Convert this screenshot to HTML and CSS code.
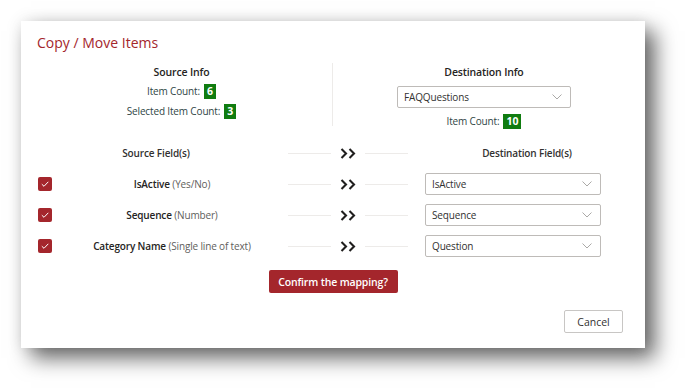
FILE: index.html
```html
<!DOCTYPE html>
<html lang="en">
<head>
<meta charset="utf-8">
<title>Copy / Move Items</title>
<link rel="stylesheet" href="styles.css">
</head>
<body>
<div class="dialog">
  <h1 class="title">Copy / Move Items</h1>

  <div class="info">
    <div class="info-col info-source">
      <div class="info-head">Source Info</div>
      <div class="info-line">Item Count: <span class="badge">6</span></div>
      <div class="info-line">Selected Item Count: <span class="badge">3</span></div>
    </div>
    <div class="info-col">
      <div class="info-head">Destination Info</div>
      <div class="select select-list">
        <span>FAQQuestions</span>
        <svg class="chev" width="10" height="6" viewBox="0 0 10 6"><path d="M0.5 0.5 L5 5 L9.5 0.5" fill="none" stroke="#a19f9d" stroke-width="0.9"/></svg>
      </div>
      <div class="info-line info-dest">Item Count: <span class="badge">10</span></div>
    </div>
  </div>

  <div class="map">
    <div class="cell"></div>
    <div class="label label-head">Source Field(s)</div>
    <div class="arrow">
      <span class="line"></span>
      <svg width="16" height="11" viewBox="0 0 16 11"><path d="M1.5 1 L6 5.5 L1.5 10 M9.5 1 L14 5.5 L9.5 10" fill="none" stroke="#201f1e" stroke-width="2.1"/></svg>
      <span class="line"></span>
    </div>
    <div class="label dest-head">Destination Field(s)</div>

    <div class="cell"><span class="check"><svg width="14" height="14" viewBox="0 0 14 14"><path d="M3.8 7.2 L6 9.3 L10.3 4.8" fill="none" stroke="#fff" stroke-width="1"/></svg></span></div>
    <div class="label"><b>IsActive</b> <span class="type">(Yes/No)</span></div>
    <div class="arrow">
      <span class="line"></span>
      <svg width="16" height="11" viewBox="0 0 16 11"><path d="M1.5 1 L6 5.5 L1.5 10 M9.5 1 L14 5.5 L9.5 10" fill="none" stroke="#201f1e" stroke-width="2.1"/></svg>
      <span class="line"></span>
    </div>
    <div class="select"><span>IsActive</span><svg class="chev" width="10" height="6" viewBox="0 0 10 6"><path d="M0.5 0.5 L5 5 L9.5 0.5" fill="none" stroke="#a19f9d" stroke-width="0.9"/></svg></div>

    <div class="cell"><span class="check"><svg width="14" height="14" viewBox="0 0 14 14"><path d="M3.8 7.2 L6 9.3 L10.3 4.8" fill="none" stroke="#fff" stroke-width="1"/></svg></span></div>
    <div class="label"><b>Sequence</b> <span class="type">(Number)</span></div>
    <div class="arrow">
      <span class="line"></span>
      <svg width="16" height="11" viewBox="0 0 16 11"><path d="M1.5 1 L6 5.5 L1.5 10 M9.5 1 L14 5.5 L9.5 10" fill="none" stroke="#201f1e" stroke-width="2.1"/></svg>
      <span class="line"></span>
    </div>
    <div class="select"><span>Sequence</span><svg class="chev" width="10" height="6" viewBox="0 0 10 6"><path d="M0.5 0.5 L5 5 L9.5 0.5" fill="none" stroke="#a19f9d" stroke-width="0.9"/></svg></div>

    <div class="cell"><span class="check"><svg width="14" height="14" viewBox="0 0 14 14"><path d="M3.8 7.2 L6 9.3 L10.3 4.8" fill="none" stroke="#fff" stroke-width="1"/></svg></span></div>
    <div class="label"><b>Category Name</b> <span class="type">(Single line of text)</span></div>
    <div class="arrow">
      <span class="line"></span>
      <svg width="16" height="11" viewBox="0 0 16 11"><path d="M1.5 1 L6 5.5 L1.5 10 M9.5 1 L14 5.5 L9.5 10" fill="none" stroke="#201f1e" stroke-width="2.1"/></svg>
      <span class="line"></span>
    </div>
    <div class="select"><span>Question</span><svg class="chev" width="10" height="6" viewBox="0 0 10 6"><path d="M0.5 0.5 L5 5 L9.5 0.5" fill="none" stroke="#a19f9d" stroke-width="0.9"/></svg></div>
  </div>

  <div class="confirm-row">
    <button class="btn-primary">Confirm the mapping?</button>
  </div>
  <div class="footer">
    <button class="btn-default">Cancel</button>
  </div>
</div>
</body>
</html>
```

FILE: styles.css
```css
* { box-sizing: border-box; }

html, body {
  margin: 0;
  background: #ffffff;
}

body {
  padding: 21px 42px 42px 21px;
  min-height: 390px;
  font-family: "Segoe UI", "Open Sans", "Noto Sans", sans-serif;
  font-size: 10px;
  letter-spacing: -0.15px;
  color: #323130;
}

.dialog {
  width: 624px;
  height: 327px;
  background: #fff;
  padding: 11px 10px 15px;
  box-shadow: 10px 10px 20px rgba(0, 0, 0, 0.6), 0 0 14px rgba(0, 0, 0, 0.08);
}

.title {
  margin: 0 0 9px 6px;
  font-size: 14px;
  line-height: 22px;
  font-weight: 400;
  letter-spacing: 0;
  color: #a4262c;
}

.info {
  display: grid;
  grid-template-columns: 1fr 1fr;
}

.info-col {
  display: flex;
  flex-direction: column;
  align-items: center;
}

.info-source {
  align-self: start;
  border-right: 1px solid #edebe9;
  padding-bottom: 5px;
}

.info-head {
  font-weight: 600;
  font-size: 10.5px;
  line-height: 18px;
  color: #252423;
}

.info-line {
  height: 20px;
  display: flex;
  align-items: center;
  gap: 4px;
  color: #2f4545;
}

.info-dest {
  margin-top: 3px;
}

.badge {
  display: inline-block;
  background: #107c10;
  color: #fff;
  font-weight: 700;
  font-size: 10.5px;
  letter-spacing: 0;
  line-height: 15px;
  padding: 0 3px;
  min-width: 12px;
  text-align: center;
}

.select {
  height: 22px;
  border: 1px solid #bebbb8;
  border-radius: 2px;
  display: flex;
  align-items: center;
  justify-content: space-between;
  padding: 0 8px 0 6px;
  color: #323130;
  background: #fff;
}

.select-list {
  width: 174px;
  margin-top: 5px;
}

.map {
  margin: 11px 0 0 7px;
  width: 563px;
  display: grid;
  grid-template-columns: 14px 236px 120px 17px 176px;
  grid-auto-rows: 22px;
  row-gap: 9px;
  align-items: center;
}

.map .select {
  grid-column: 5;
}

.map .arrow {
  grid-column: 3;
}

.cell {
  display: flex;
  align-items: center;
}

.check {
  width: 14px;
  height: 14px;
  background: #a4262c;
  border-radius: 2px;
  display: flex;
}

.label {
  text-align: center;
  padding-left: 4px;
  color: #323130;
  white-space: nowrap;
}

.label b {
  font-weight: 600;
  color: #252423;
}

.type {
  color: #605e5c;
}

.label-head {
  padding: 0 28px 0 0;
  font-weight: 600;
}

.dest-head {
  grid-column: 5;
  padding: 0 0 0 28px;
  font-weight: 600;
}

.arrow {
  display: flex;
  align-items: center;
  gap: 9px;
}

.line {
  flex: 1;
  height: 1px;
  background: #edebe9;
}

.confirm-row {
  display: flex;
  justify-content: center;
  margin-top: 13px;
}

.btn-primary {
  height: 23px;
  width: 129px;
  border: none;
  border-radius: 2px;
  background: #a4262c;
  color: #fff;
  font-family: inherit;
  font-size: 10.5px;
  letter-spacing: -0.15px;
  font-weight: 600;
  padding: 0;
}

.footer {
  display: flex;
  justify-content: flex-end;
  padding-right: 12px;
  margin-top: 17px;
}

.btn-default {
  height: 23px;
  width: 59px;
  border: 1px solid #c8c6c4;
  border-radius: 2px;
  background: #fff;
  color: #323130;
  font-family: inherit;
  font-size: 10.5px;
  padding: 0;
}
```
